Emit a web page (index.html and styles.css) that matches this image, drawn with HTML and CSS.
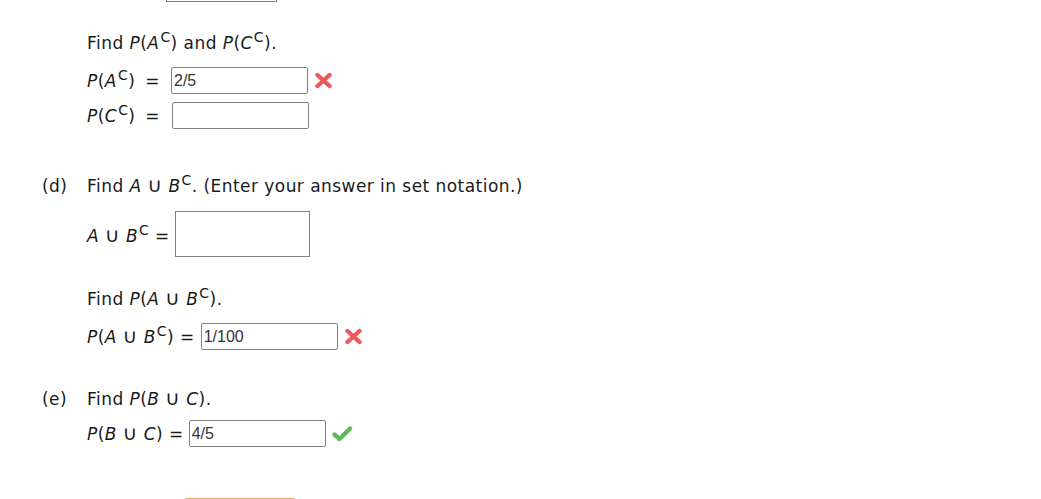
FILE: index.html
```html
<!DOCTYPE html>
<html lang="en">
<head>
  <meta charset="UTF-8">
  <title>Question parts</title>
  <link rel="stylesheet" href="styles.css">
</head>
<body>
  <div class="question">
    <div class="prev-box"></div>

    <div class="part part-c">
      <div class="part-label"></div>
      <div class="part-body">
        <p class="prompt">Find <i>P</i>(<i>A</i><sup>C</sup>) and <i>P</i>(<i>C</i><sup>C</sup>).</p>
        <div class="answer-row first-row">
          <span class="ans-label fixed"><span><i>P</i>(<i>A</i><sup>C</sup>)</span><span>=</span></span>
          <input type="text" class="answer" value="2/5" readonly>
          <svg class="mark" width="19" height="17" viewBox="0 0 19 17"><path d="M3.5 3 L15.5 14 M15.5 3 L3.5 14" stroke="#ec5a5d" stroke-width="4.4" stroke-linecap="round"/></svg>
        </div>
        <div class="answer-row">
          <span class="ans-label fixed"><span><i>P</i>(<i>C</i><sup>C</sup>)</span><span>=</span></span>
          <input type="text" class="answer" value="" readonly>
        </div>
      </div>
    </div>

    <div class="part part-d">
      <div class="part-label">(d)</div>
      <div class="part-body">
        <p class="prompt">Find <i>A</i> <span class="cup">∪</span> <i>B</i><sup>C</sup>. (Enter your answer in set notation.)</p>
        <div class="answer-row set-row">
          <span class="ans-label"><i>A</i> <span class="cup">∪</span> <i>B</i><sup>C</sup> =</span>
          <div class="set-box"></div>
        </div>
        <p class="prompt sub-prompt">Find <i>P</i>(<i>A</i> <span class="cup">∪</span> <i>B</i><sup>C</sup>).</p>
        <div class="answer-row first-row">
          <span class="ans-label"><i>P</i>(<i>A</i> <span class="cup">∪</span> <i>B</i><sup>C</sup>) =</span>
          <input type="text" class="answer" value="1/100" readonly>
          <svg class="mark" width="19" height="17" viewBox="0 0 19 17"><path d="M3.5 3 L15.5 14 M15.5 3 L3.5 14" stroke="#ec5a5d" stroke-width="4.4" stroke-linecap="round"/></svg>
        </div>
      </div>
    </div>

    <div class="part part-e">
      <div class="part-label">(e)</div>
      <div class="part-body">
        <p class="prompt">Find <i>P</i>(<i>B</i> <span class="cup">∪</span> <i>C</i>).</p>
        <div class="answer-row e-row">
          <span class="ans-label"><i>P</i>(<i>B</i> <span class="cup">∪</span> <i>C</i>) =</span>
          <input type="text" class="answer" value="4/5" readonly>
          <svg class="mark" width="22" height="17" viewBox="0 0 22 17"><path d="M3.5 9.5 L8.5 14 L19 3.5" fill="none" stroke="#5cb85c" stroke-width="4.4" stroke-linecap="round" stroke-linejoin="round"/></svg>
        </div>
      </div>
    </div>

    <div class="next-btn"></div>
  </div>
</body>
</html>
```

FILE: styles.css
```css
html, body {
  margin: 0;
  padding: 0;
  background: #fff;
  font-family: 'DejaVu Sans', Verdana, sans-serif;
  font-size: 17px;
  letter-spacing: 0.45px;
  color: #1a1a1a;
  overflow: hidden;
}
.question {
  padding-left: 42px;
}
.prev-box {
  width: 109px;
  height: 24px;
  margin: -23px 0 0 124px;
  border: 1px solid #808080;
  border-top: none;
}
.part {
  display: flex;
}
.part-label {
  width: 45px;
  flex-shrink: 0;
  line-height: 20px;
}
.part-body {
  flex: 1;
}
.prompt {
  margin: 0;
  line-height: 20px;
  white-space: nowrap;
}
.part-c {
  margin-top: 31px;
}
.part-d {
  margin-top: 47px;
}
.part-e {
  margin-top: 39px;
}
sup {
  font-size: 14px;
  font-style: normal;
  vertical-align: 7px;
  line-height: 0;
  margin-left: 1px;
}
.cup {
  font-size: 20px;
  line-height: 0;
}
.answer-row {
  display: flex;
  align-items: center;
  gap: 7px;
  margin-top: 8px;
  line-height: 20px;
}
.first-row {
  margin-top: 14px;
  gap: 6px;
}
.e-row {
  margin-top: 11px;
  gap: 5px;
}
.ans-label {
  white-space: nowrap;
}
.ans-label.fixed {
  display: flex;
  justify-content: space-between;
  width: 78px;
  padding-right: 5px;
  box-sizing: border-box;
}
.answer {
  width: 137px;
  height: 27px;
  box-sizing: border-box;
  border: 1px solid #808080;
  border-radius: 2px;
  padding: 1px 2px 0;
  font-family: 'Liberation Sans', Arial, sans-serif;
  font-size: 16px;
  letter-spacing: normal;
  color: #333;
  outline: none;
}
.mark {
  margin-left: 0;
}
.set-row {
  margin-top: 15px;
  align-items: flex-end;
  gap: 5px;
}
.set-row .ans-label {
  padding-bottom: 11px;
}
.set-box {
  width: 135px;
  height: 46px;
  box-sizing: border-box;
  border: 1px solid #808080;
}
.sub-prompt {
  margin-top: 32px;
}
.next-btn {
  width: 112px;
  height: 20px;
  margin: 51px 0 0 142px;
  border-top: 2px solid #e9a968;
  border-radius: 3px 3px 0 0;
}
```
